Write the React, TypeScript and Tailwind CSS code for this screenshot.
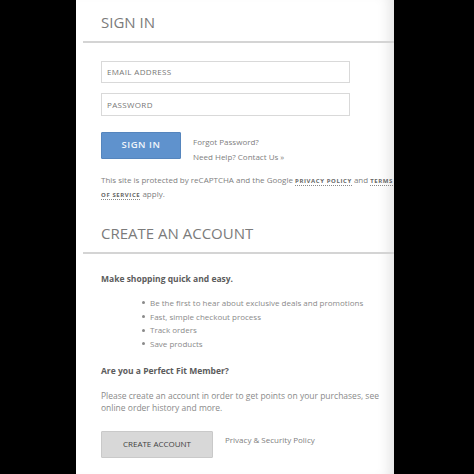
import React from "react";

export default function App() {
  const bullets = [
    "Be the first to hear about exclusive deals and promotions",
    "Fast, simple checkout process",
    "Track orders",
    "Save products",
  ];
  return (
    <div className="w-[474px] h-[474px] bg-black flex" style={{ fontFamily: '"Open Sans", "Noto Sans", sans-serif' }}>
      <div className="ml-[76px] w-[318px] h-full bg-white overflow-hidden shadow-[inset_-14px_0_14px_-10px_rgba(0,0,0,0.12)]">
        <div className="pl-[25px] pt-[12px] h-[41px] text-[15px] leading-[20px] text-[#7b7b7b]">SIGN IN</div>
        <div className="ml-[7px] w-[330px] h-[2px] bg-[#d4d4d4]" />
        <div className="pl-[25px] w-[420px]">
          <div className="mt-[18px] w-[249px] h-[22px] border border-[#d9d9d9] flex items-center pl-[5px] text-[8px] tracking-[0.35px] text-[#777]">EMAIL ADDRESS</div>
          <div className="mt-[10px] w-[249px] h-[23px] border border-[#d9d9d9] flex items-center pl-[5px] text-[8px] tracking-[0.35px] text-[#777]">PASSWORD</div>
          <div className="mt-[16px] flex items-start h-[27px]">
            <div className="w-[80px] h-[27px] bg-[#5f92cd] border border-[#5585bd] rounded-[1px] flex items-center justify-center text-[9.5px] font-semibold tracking-[0.5px] text-[#f0f5fb]">SIGN IN</div>
            <div className="ml-[12px] pt-[2px] text-[8px] leading-[15px] text-[#808080]">
              <div>Forgot Password?</div>
              <div>Need Help? Contact Us »</div>
            </div>
          </div>
          <div className="mt-[14px] w-[300px] text-[8px] leading-[14px] text-[#808080]">
            This site is protected by reCAPTCHA and the Google{" "}
            <span className="text-[6px] leading-[8px] align-baseline font-bold tracking-[0.6px] text-[#666] border-b border-dotted border-[#888]">PRIVACY POLICY</span> and{" "}
            <span className="text-[6px] leading-[8px] align-baseline font-bold tracking-[0.6px] text-[#666] border-b border-dotted border-[#888]">TERMS OF SERVICE</span> apply.
          </div>
        </div>
        <div className="mt-[22px] pl-[25px] h-[20px] text-[15px] leading-[20px] text-[#7b7b7b]">CREATE AN ACCOUNT</div>
        <div className="mt-[9px] ml-[7px] w-[330px] h-[2px] bg-[#d4d4d4]" />
        <div className="pl-[25px] w-[420px]">
          <div className="mt-[18px] text-[8.5px] leading-[14px] font-bold text-[#5c5c5c]">Make shopping quick and easy.</div>
          <div className="mt-[10px] pl-[41px]">
            {bullets.map((b) => (
              <div key={b} className="flex items-center h-[13.7px] text-[8px] text-[#8a8a8a]">
                <span className="w-[3px] h-[3px] rounded-full bg-[#8a8a8a] mr-[5px]" />
                <span>{b}</span>
              </div>
            ))}
          </div>
          <div className="mt-[13px] text-[8.5px] leading-[14px] font-bold text-[#5c5c5c]">Are you a Perfect Fit Member?</div>
          <div className="mt-[12px] w-[300px] text-[8.5px] leading-[12.5px] text-[#8a8a8a]">
            Please create an account in order to get points on your purchases, see online order history and more.
          </div>
          <div className="mt-[16px] flex items-start">
            <div className="w-[112px] h-[27px] bg-[#d8d8d8] border border-[#c9c9c9] rounded-[1px] flex items-center justify-center text-[8px] text-[#3f3f3f]">CREATE ACCOUNT</div>
            <div className="ml-[12px] pt-[2px] text-[8px] leading-[14px] text-[#808080]">Privacy &amp; Security Policy</div>
          </div>
        </div>
      </div>
    </div>
  );
}
